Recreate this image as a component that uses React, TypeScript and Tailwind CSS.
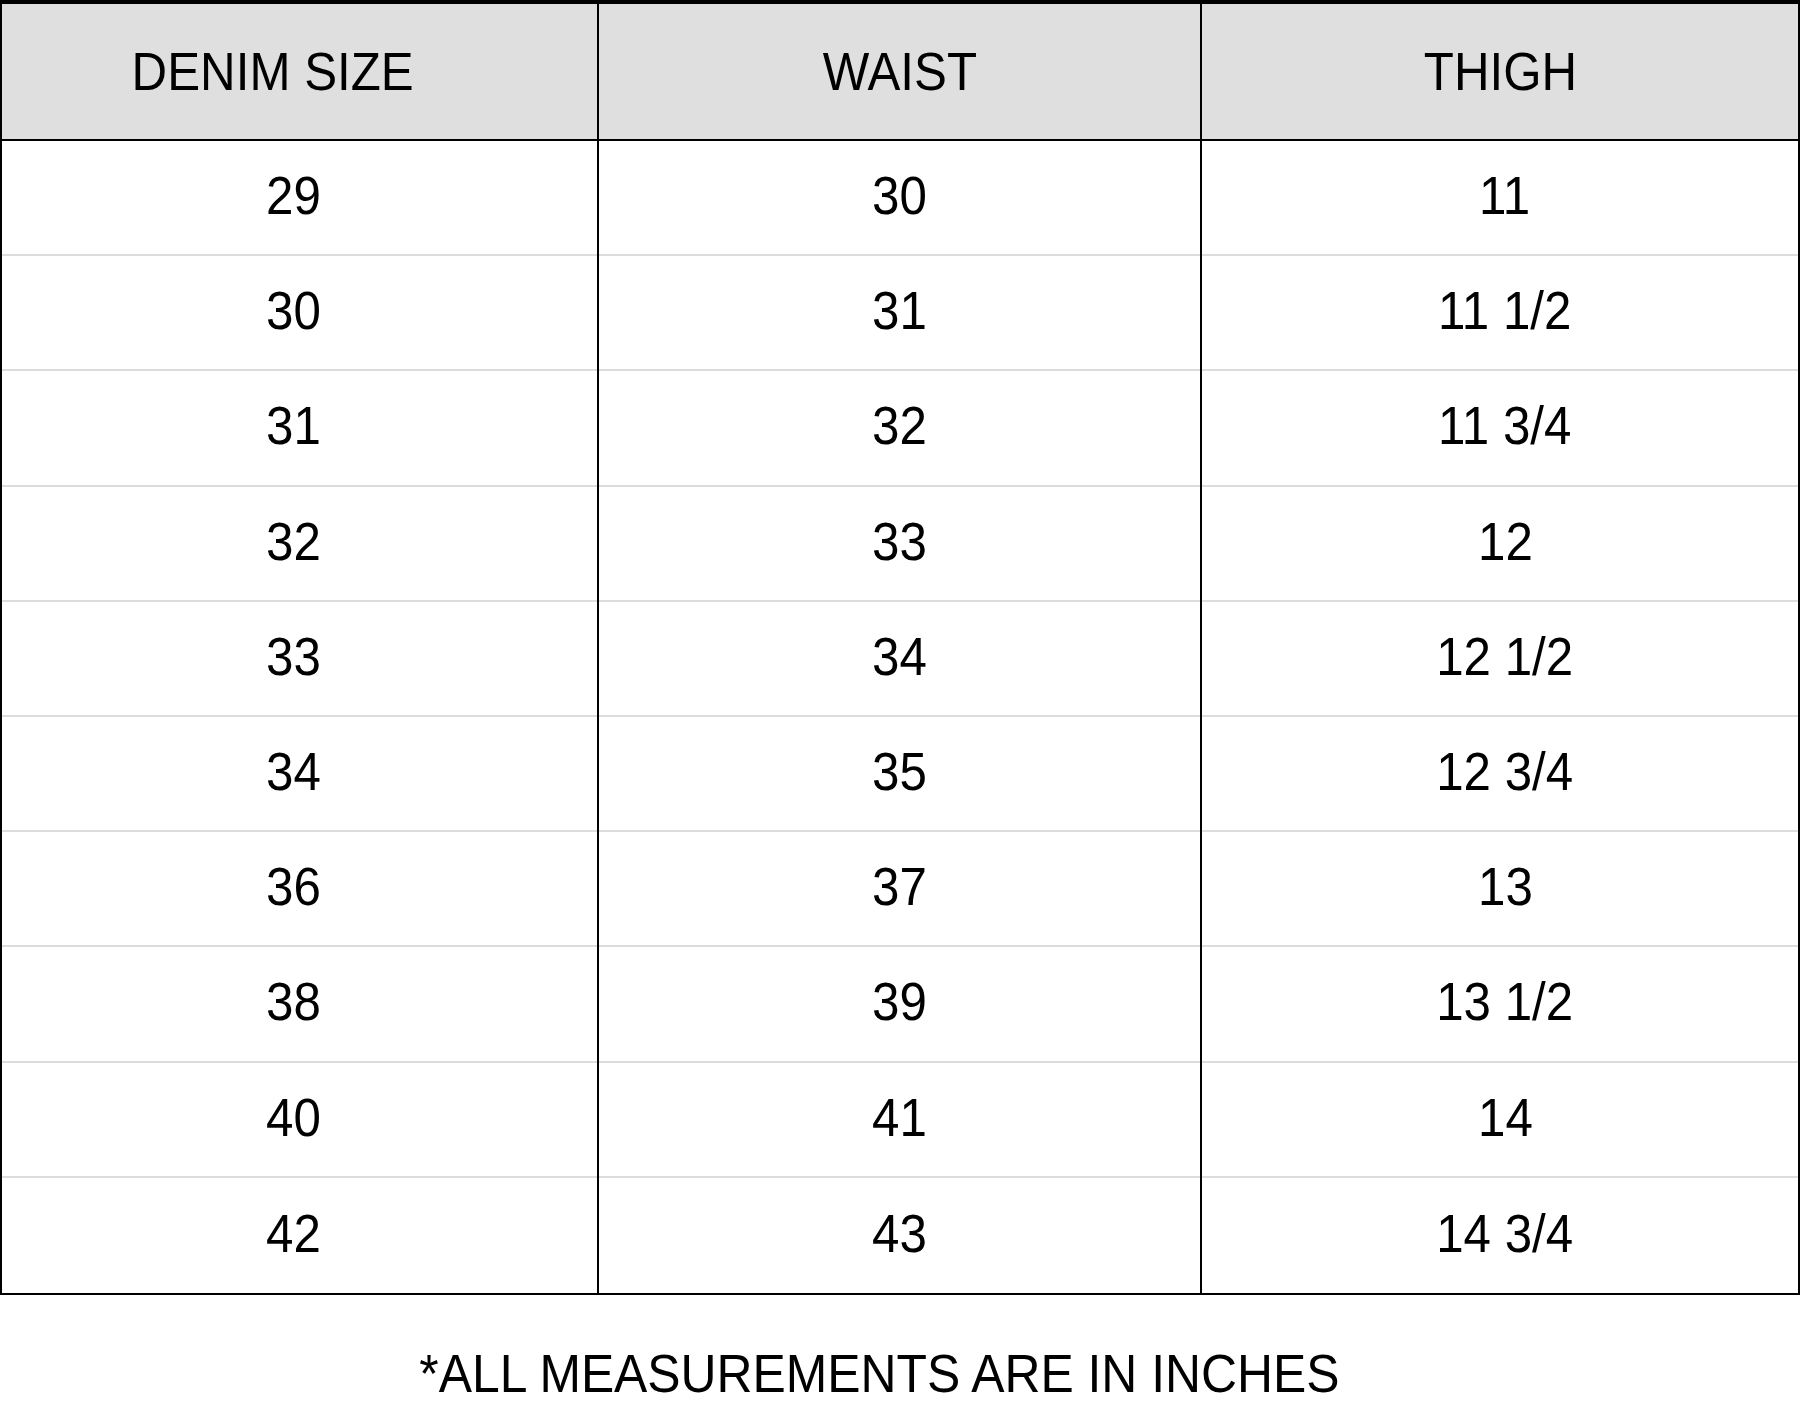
import React from 'react';

const COLUMNS = [
  {
    title: 'DENIM SIZE',
    width: 'w-[595px]',
    head: 'pr-[54px]',
    cell: 'pr-[12px]',
    values: ['29', '30', '31', '32', '33', '34', '36', '38', '40', '42'],
  },
  {
    title: 'WAIST',
    width: 'w-[603px] border-l-2 border-black',
    head: '',
    cell: '',
    values: ['30', '31', '32', '33', '34', '35', '37', '39', '41', '43'],
  },
  {
    title: 'THIGH',
    width: 'flex-1 border-l-2 border-black',
    head: '',
    cell: 'pl-[10px]',
    values: ['11', '11 1/2', '11 3/4', '12', '12 1/2', '12 3/4', '13', '13 1/2', '14', '14 3/4'],
  },
];

// Arial Narrow look: Liberation Sans squeezed a little horizontally
const Narrow: React.FC<{ children: React.ReactNode }> = ({ children }) => (
  <span className="inline-block whitespace-pre scale-x-[0.93]">{children}</span>
);

const App: React.FC = () => {
  return (
    <div className="w-[1800px] min-h-[1412px] bg-white text-black font-['Liberation_Sans',Arial,sans-serif]">
      {/* Size table */}
      <div className="flex border-t-4 border-x-2 border-b-2 border-black text-[53px] leading-none">
        {COLUMNS.map((col) => (
          <div key={col.title} className={`flex flex-col ${col.width}`}>
            <div className={`flex items-center justify-center h-[137px] bg-[#dfdfdf] border-b-2 border-black ${col.head}`}>
              <Narrow>{col.title}</Narrow>
            </div>
            {col.values.map((v, i) => (
              <div
                key={i}
                className={`flex items-center justify-center h-[115.2px] pb-[4px] ${col.cell} ${
                  i < col.values.length - 1 ? 'border-b-2 border-[#dcdcdc]' : ''
                }`}
              >
                <Narrow>{v}</Narrow>
              </div>
            ))}
          </div>
        ))}
      </div>

      {/* Footnote */}
      <p className="mt-[48px] pr-[42px] text-center text-[53px] leading-[61px]">
        <span className="inline-block whitespace-pre scale-x-[0.94]">*ALL MEASUREMENTS ARE IN INCHES</span>
      </p>
    </div>
  );
};

export default App;
